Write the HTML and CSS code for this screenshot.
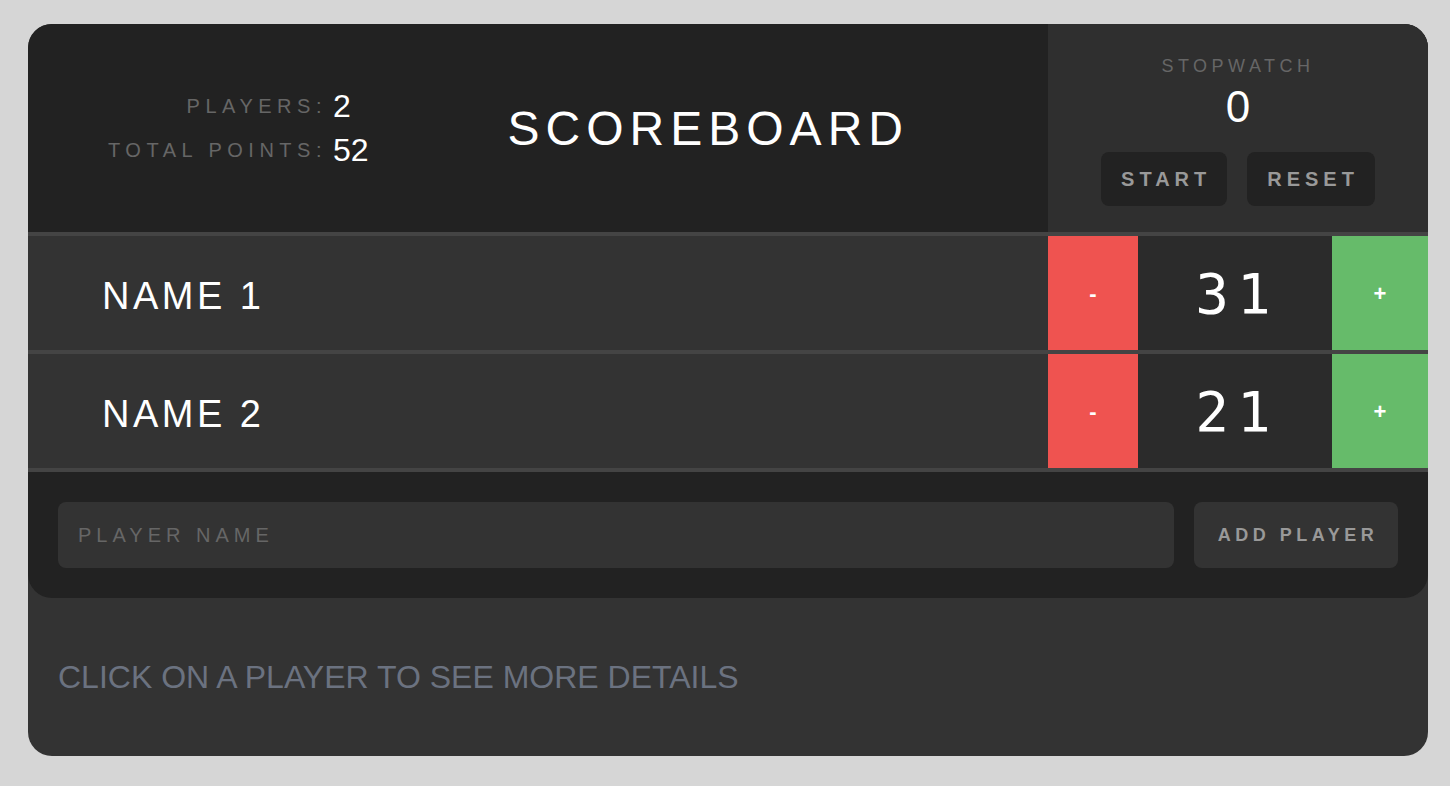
FILE: index.html
```html
<!DOCTYPE html>
<html lang="en">
<head>
    <meta charset="UTF-8">
    <meta name="viewport" content="width=device-width, initial-scale=1.0">
    <title>Scoreboard</title>
    <link rel="stylesheet" href="styles.css">
</head>
<body>
    <div class="container">
        <div class="scoreboard">
            <div class="header">
                <table class="stats">
                    <tr>
                        <td class="stat-label">Players:</td>
                        <td class="stat-value">2</td>
                    </tr>
                    <tr>
                        <td class="stat-label">Total Points:</td>
                        <td class="stat-value">52</td>
                    </tr>
                </table>
                <h1 class="title">Scoreboard</h1>
                <div class="stopwatch">
                    <h2 class="stopwatch-label">Stopwatch</h2>
                    <div class="stopwatch-time">0</div>
                    <div class="stopwatch-buttons">
                        <button type="button" class="sw-button">Start</button>
                        <button type="button" class="sw-button">Reset</button>
                    </div>
                </div>
            </div>

            <div class="player">
                <div class="player-name">Name 1</div>
                <div class="counter">
                    <button type="button" class="counter-action decrement">-</button>
                    <div class="counter-score">31</div>
                    <button type="button" class="counter-action increment">+</button>
                </div>
            </div>
            <div class="player">
                <div class="player-name">Name 2</div>
                <div class="counter">
                    <button type="button" class="counter-action decrement">-</button>
                    <div class="counter-score">21</div>
                    <button type="button" class="counter-action increment">+</button>
                </div>
            </div>

            <form class="add-player-form">
                <input type="text" class="player-input" placeholder="Player Name">
                <input type="submit" class="add-button" value="Add Player">
            </form>
        </div>
        <div class="details">
            <p>Click on a player to see more details</p>
        </div>
    </div>
</body>
</html>
```

FILE: styles.css
```css
body {
    margin: 0;
    background-color: #d6d6d6;
    font-family: "Liberation Sans", Arial, sans-serif;
}
.container {
    width: 1400px;
    margin: 24px 0 0 28px;
    background-color: #333;
    border-radius: 24px;
    overflow: hidden;
}
.scoreboard {
    background-color: #222;
    border-radius: 0 0 24px 24px;
    overflow: hidden;
}
.header {
    display: flex;
    align-items: stretch;
    height: 208px;
    border-bottom: 4px solid #444;
}
.stats {
    align-self: center;
    border-collapse: collapse;
    margin-left: 80px;
}
.stats td {
    padding: 0;
    height: 44px;
}
.stat-label {
    text-align: right;
    color: #666;
    font-size: 20px;
    letter-spacing: 5.5px;
    text-transform: uppercase;
}
.stats .stat-label {
    padding-right: 6px;
}
.stat-value {
    color: #fff;
    font-size: 32px;
}
.title {
    flex: 1;
    align-self: center;
    margin: 0;
    text-align: center;
    color: #fff;
    font-size: 48px;
    font-weight: normal;
    letter-spacing: 6px;
    text-transform: uppercase;
}
.stopwatch {
    width: 380px;
    background-color: #2f2f2f;
    display: flex;
    flex-direction: column;
    align-items: center;
    padding-top: 33px;
    box-sizing: border-box;
}
.stopwatch-label {
    margin: 0;
    color: #666;
    font-size: 18px;
    font-weight: normal;
    line-height: 1;
    letter-spacing: 4.5px;
    text-transform: uppercase;
}
.stopwatch-time {
    margin-top: 10px;
    color: #fff;
    font-size: 44px;
    line-height: 1;
}
.stopwatch-buttons {
    display: flex;
    gap: 20px;
    margin-top: 23px;
}
.sw-button {
    height: 54px;
    padding: 0 16px 0 20px;
    border: none;
    border-radius: 8px;
    background-color: #222;
    color: #999;
    font-family: "Liberation Sans", Arial, sans-serif;
    font-size: 20px;
    font-weight: bold;
    letter-spacing: 5px;
    text-transform: uppercase;
}

.player {
    display: flex;
    height: 114px;
    background-color: #333;
    border-bottom: 4px solid #444;
}
.player-name {
    flex: 1;
    display: flex;
    align-items: center;
    padding: 6px 0 0 74px;
    color: #fff;
    font-size: 38px;
    letter-spacing: 3.5px;
    text-transform: uppercase;
}
.counter {
    display: flex;
}
.counter-action {
    border: none;
    padding-top: 3px;
    color: #fff;
    font-family: "Liberation Sans", Arial, sans-serif;
    font-size: 22px;
    font-weight: bold;
}
.decrement {
    width: 90px;
    background-color: #ef5350;
}
.increment {
    width: 96px;
    background-color: #66bb6a;
}
.counter-score {
    width: 194px;
    display: flex;
    align-items: center;
    justify-content: center;
    background-color: #2b2b2b;
    color: #fff;
    font-family: "DejaVu Sans Mono", monospace;
    font-size: 56px;
    letter-spacing: 8px;
    padding-left: 4px;
    box-sizing: border-box;
}

.add-player-form {
    display: flex;
    gap: 20px;
    padding: 30px;
}
.player-input {
    flex: 1;
    height: 66px;
    padding: 0 20px;
    border: none;
    border-radius: 8px;
    background-color: #333;
    color: #fff;
    font-family: "Liberation Sans", Arial, sans-serif;
    font-size: 20px;
    letter-spacing: 5px;
    text-transform: uppercase;
    box-sizing: border-box;
}
.player-input::placeholder {
    color: #666;
}
.add-button {
    width: 204px;
    height: 66px;
    padding: 0 0 0 4px;
    border: none;
    border-radius: 8px;
    background-color: #333;
    color: #999;
    font-family: "Liberation Sans", Arial, sans-serif;
    font-size: 18px;
    font-weight: bold;
    letter-spacing: 4.5px;
    text-transform: uppercase;
}

.details {
    height: 158px;
    display: flex;
    align-items: center;
    padding: 0 30px;
}
.details p {
    margin: 0;
    color: #6b7280;
    font-size: 32px;
    text-transform: uppercase;
}
```
